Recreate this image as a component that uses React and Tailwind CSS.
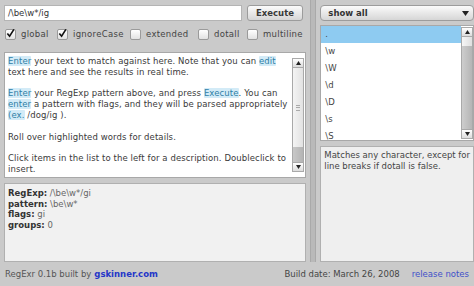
import React from 'react';

const font = { fontFamily: '"DejaVu Sans", Verdana, sans-serif' };

// little checkbox with optional tick
function Check({ checked, label, className = '' }) {
  return (
    <div className={`flex items-center shrink-0 ${className}`}>
      <div className="w-[11px] h-[11px] border border-[#9a9a9a] rounded-[2px] bg-gradient-to-b from-[#ffffff] to-[#e2e2e2] flex items-center justify-center">
        {checked && (
          <svg width="10" height="10" viewBox="0 0 10 10" className="-mt-[2px]">
            <path d="M1.5 5.5 L4 8.5 L8.8 1" fill="none" stroke="#111" strokeWidth="1.8" />
          </svg>
        )}
      </div>
      <span className="ml-[5px] text-[8.5px] text-[#444] tracking-[0.3px] whitespace-nowrap">{label}</span>
    </div>
  );
}

function Hl({ children }) {
  return <span className="bg-[#d3ebf7] text-[#2f7fa6] rounded-[1px]">{children}</span>;
}

function ScrollArrow({ up }) {
  return (
    <div className="h-[10px] bg-gradient-to-b from-[#ffffff] to-[#dcdcdc] border border-[#a9a9a9] flex items-center justify-center">
      <svg width="5" height="4" viewBox="0 0 5 4">
        <path d={up ? 'M0 4 L2.5 0 L5 4 Z' : 'M0 0 L2.5 4 L5 0 Z'} fill="#222" />
      </svg>
    </div>
  );
}

const items = ['.', '\\w', '\\W', '\\d', '\\D', '\\s', '\\S'];

export default function App() {
  return (
    <div className="w-[474px] h-[286px] bg-[#cacaca] flex flex-col overflow-hidden" style={font}>
      <div className="flex h-[262px]">
        {/* left column */}
        <div className="w-[303px] ml-[4px] flex flex-col">
          <div className="flex items-center mt-[5px] h-[16px]">
            <div className="w-[238px] h-[16px] bg-white border border-[#b4b4b4] text-[8.5px] text-[#333] pl-[3px] leading-[14px]">
              /\be\w*/ig
            </div>
            <div className="ml-[5px] w-[56px] h-[16px] rounded-[3px] border border-[#9c9c9c] bg-gradient-to-b from-[#fbfbfb] to-[#d6d6d6] text-[8.5px] font-bold text-[#3a3a3a] flex items-center justify-center">
              Execute
            </div>
          </div>
          <div className="flex items-center mt-[7px] h-[12px] pl-[1px]">
            <Check checked label="global" className="w-[52px]" />
            <Check checked label="ignoreCase" className="w-[73px]" />
            <Check label="extended" className="w-[68px]" />
            <Check label="dotall" className="w-[49px]" />
            <Check label="multiline" />
          </div>
          <div className="mt-[12px] h-[126px] bg-white border border-[#a8a8a8] flex">
            <div className="flex-1 pl-[3px] pt-[3px] text-[8.5px] leading-[10.8px] text-[#3a3a3a] whitespace-nowrap overflow-hidden tracking-[0.1px]">
              <div><Hl>Enter</Hl> your text to match against here. Note that you can <Hl>edit</Hl></div>
              <div>text here and see the results in real time.</div>
              <div>&nbsp;</div>
              <div><Hl>Enter</Hl> your RegExp pattern above, and press <Hl>Execute</Hl>. You can</div>
              <div><Hl>enter</Hl> a pattern with flags, and they will be parsed appropriately</div>
              <div><Hl>(ex.</Hl> /dog/ig ).</div>
              <div>&nbsp;</div>
              <div>Roll over highlighted words for details.</div>
              <div>&nbsp;</div>
              <div>Click items in the list to the left for a description. Doubleclick to</div>
              <div>insert.</div>
            </div>
            <div className="w-[12px] mr-[1px] my-[5px] flex flex-col">
              <ScrollArrow up />
              <div className="h-[79px] border-x border-[#a9a9a9] bg-gradient-to-r from-[#f4f4f4] to-[#e2e2e2] flex items-center justify-center">
                <div className="w-[4px] h-[6px] border-y border-[#aaa] flex items-center"><div className="w-full h-px bg-[#aaa]" /></div>
              </div>
              <div className="flex-1 border-x border-[#a9a9a9] bg-gradient-to-r from-[#c8c8c8] to-[#b4b4b4]" />
              <ScrollArrow />
            </div>
          </div>
          <div className="mt-[5px] h-[79px] bg-[#f1f1f1] border border-[#b0b0b0] pl-[3px] pt-[4px] text-[8.5px] leading-[10.6px] text-[#666]">
            <div><b className="text-[#333]">RegExp:</b> /\be\w*/gi</div>
            <div><b className="text-[#333]">pattern:</b> \be\w*</div>
            <div><b className="text-[#333]">flags:</b> gi</div>
            <div><b className="text-[#333]">groups:</b> 0</div>
          </div>
        </div>

        {/* divider */}
        <div className="w-[14px] flex justify-center">
          <div className="w-[6px] h-full bg-[#b9b9b9] border-x border-[#a9a9a9]" />
        </div>

        {/* right column */}
        <div className="w-[154px] flex flex-col">
          <div className="mt-[5px] h-[16px] rounded-[4px] border border-[#9c9c9c] bg-gradient-to-b from-[#fbfbfb] to-[#d6d6d6] flex items-center pl-[7px] pr-[4px]">
            <span className="flex-1 text-[8.5px] font-bold text-[#333]">show all</span>
            <svg width="7" height="5" viewBox="0 0 7 5"><path d="M0 0 L3.5 5 L7 0 Z" fill="#222" /></svg>
          </div>
          <div className="mt-[4px] h-[116px] bg-white border border-[#a8a8a8] flex overflow-hidden">
            <div className="flex-1 text-[8.5px] text-[#444]">
              {items.map((it, i) => (
                <div
                  key={i}
                  className={`h-[17px] pl-[4px] flex items-center ${i === 0 ? 'bg-[#8ecbf1] items-end pb-[2px]' : ''}`}
                >
                  {it}
                </div>
              ))}
            </div>
            <div className="w-[12px] flex flex-col py-[1px]">
              <ScrollArrow up />
              <div className="h-[9px] border-x border-[#a9a9a9] bg-gradient-to-r from-[#f6f6f6] to-[#e0e0e0]" />
              <div className="flex-1 border-x border-[#a9a9a9] bg-gradient-to-r from-[#cdcdcd] to-[#b5b5b5]" />
              <ScrollArrow />
            </div>
          </div>
          <div className="mt-[5px] flex-1 bg-[#efefef] border border-[#b0b0b0] pl-[3px] pt-[3px] text-[8.5px] leading-[10.8px] text-[#444]">
            <div>Matches any character, except for</div>
            <div>line breaks if dotall is false.</div>
          </div>
        </div>
      </div>

      {/* footer */}
      <div className="h-[24px] flex items-center text-[8.5px] px-[5px]">
        <span className="text-[#555]">RegExr 0.1b built by </span>
        <span className="ml-[3px] font-bold text-[#2536c8]">gskinner.com</span>
        <span className="ml-auto text-[#454545]">Build date: March 26, 2008</span>
        <span className="ml-[12px] text-[#4151c9]">release notes</span>
      </div>
    </div>
  );
}
